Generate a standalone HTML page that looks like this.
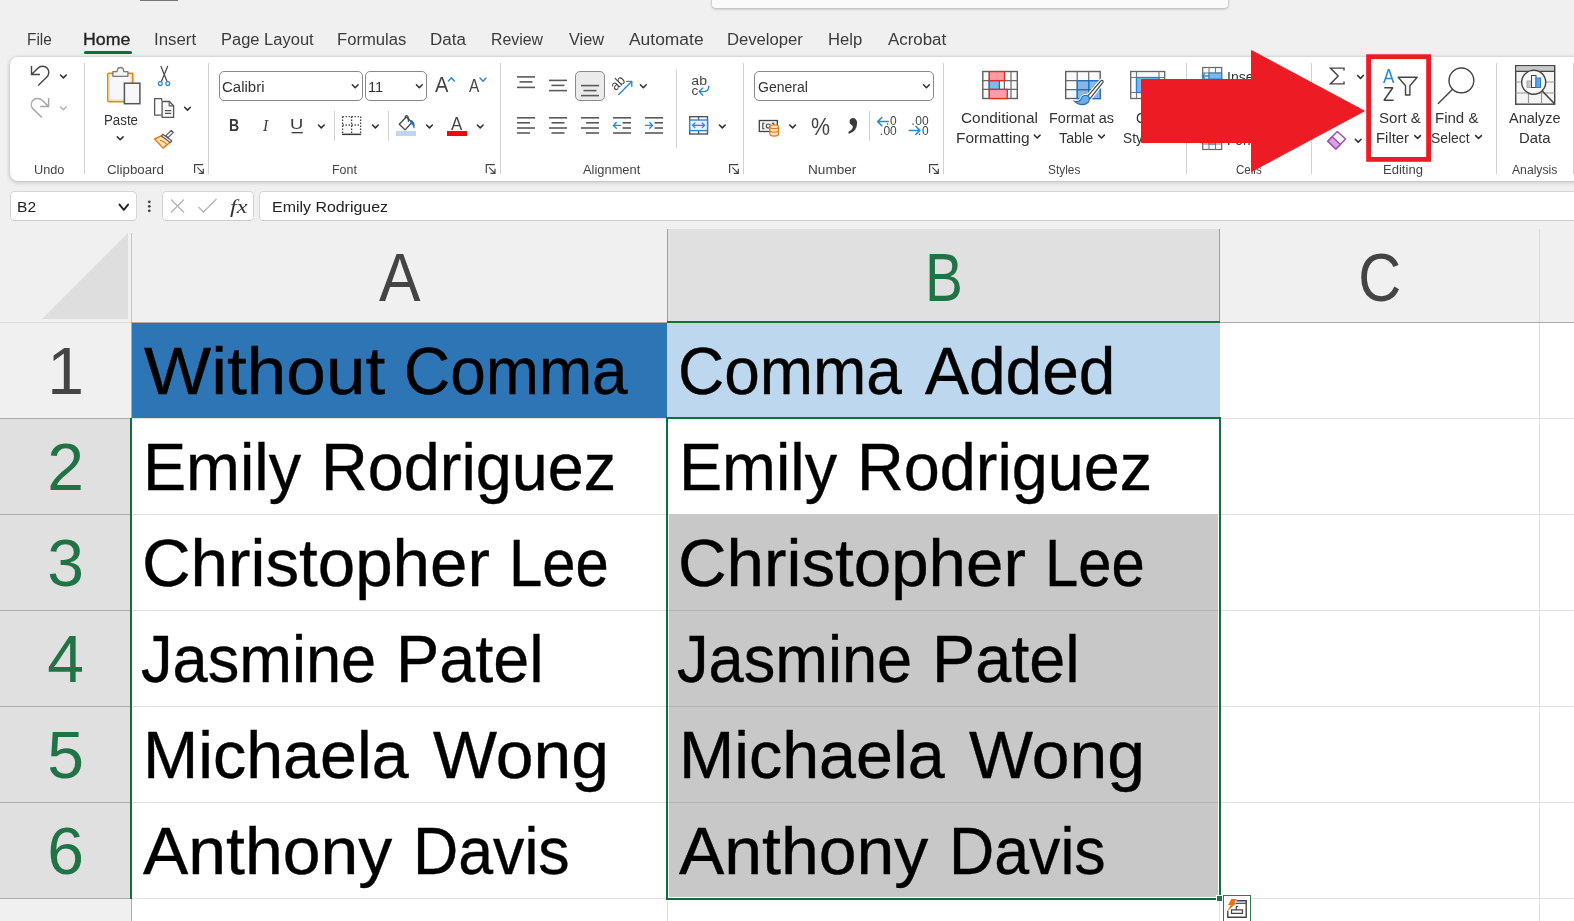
<!DOCTYPE html>
<html lang="en">
<head>
<meta charset="utf-8">
<title>Excel - Sort &amp; Filter</title>
<style>
*{box-sizing:border-box;margin:0;padding:0}
html,body{width:1574px;height:921px;overflow:hidden;background:#f0f0f0}
body{position:relative;font-family:"Liberation Sans",sans-serif;color:#242424}
.abs{position:absolute}
/* tabs */
.lb{position:absolute;white-space:nowrap}
#rc{position:absolute;left:0;top:0;width:1574px;height:230px;will-change:transform}
/* ribbon */
#ribbon{position:absolute;left:10px;top:57px;width:1600px;height:124px;background:#fff;border-radius:8px;box-shadow:0 1px 5px rgba(0,0,0,.22),0 0 2px rgba(0,0,0,.12)}
/* formula bar */
.fbox{position:absolute;top:191px;height:30px;background:#fff;border:1px solid #d6d6d6;border-bottom-color:#cbcbcb;border-radius:4.5px}
/* sheet */
#sheet{position:absolute;left:0;top:229px;width:1574px;height:692px;background:#fff}
.colh{position:absolute;top:0;height:93px;background:#f0f0f0;font-size:68.4px;line-height:96px;text-align:center;color:#444}
.rowh{position:absolute;left:0;width:131px;height:96px;background:#f0f0f0;font-size:66px;line-height:96px;text-align:center;color:#444}
.rowh.sel{background:#e0e0e0;color:#217346}
.cell{position:absolute;height:96px;font-size:66.5px;line-height:97px;color:#000;white-space:nowrap;overflow:hidden;-webkit-text-stroke:.4px #000}
.cell span{position:absolute;top:0;transform-origin:0 50%}
.hl{position:absolute;height:1px;background:#e1e1e1}
.vl{position:absolute;width:1px;background:#e1e1e1}
</style>
</head>
<body>
<!-- title bar search box remnant -->
<div class="abs" style="left:711px;top:-10px;width:518px;height:19px;background:#fafafa;border:1px solid #d0d0d0;border-bottom-color:#c4c4c4;border-radius:5px;box-shadow:0 1px 2px rgba(0,0,0,.14)"></div>
<div class="abs" style="left:140px;top:0;width:38px;height:1px;background:#777"></div>

<!-- tabs -->
<div class="abs" style="left:84px;top:51px;width:48px;height:3px;background:#0e703a;border-radius:2px"></div>

<!-- formula bar -->
<div class="fbox" style="left:10px;width:127px"></div>
<div class="fbox" style="left:162px;width:92px"></div>
<div class="fbox" style="left:259px;width:1400px"></div>
<!--FORMULA-ICONS-->
<!-- ribbon -->
<div id="ribbon"></div>
<!--RIBBON-CONTENT-->
<div id="rc">
<svg class="abs" style="left:0;top:0" width="1574" height="230" viewBox="0 0 1574 230">
<rect x="219.5" y="71.500" width="143" height="29" rx="4.500" fill="#fff" stroke="#8a8a8a" stroke-width="1"/>
<rect x="365.5" y="71.500" width="61" height="29" rx="4.500" fill="#fff" stroke="#8a8a8a" stroke-width="1"/>
<rect x="754.5" y="71.500" width="179" height="29" rx="4.500" fill="#fff" stroke="#8a8a8a" stroke-width="1"/>
<path d="M60.5 75.0l2.9 2.9l2.9 -2.9" fill="none" stroke="#2e2e2e" stroke-width="1.5" stroke-linecap="round" stroke-linejoin="round"/>
<path d="M117.3 136.9l2.9 2.9l2.9 -2.9" fill="none" stroke="#2e2e2e" stroke-width="1.5" stroke-linecap="round" stroke-linejoin="round"/>
<path d="M184.6 107.2l2.9 2.9l2.9 -2.9" fill="none" stroke="#2e2e2e" stroke-width="1.5" stroke-linecap="round" stroke-linejoin="round"/>
<path d="M352.3 84.8l2.9 2.9l2.9 -2.9" fill="none" stroke="#2e2e2e" stroke-width="1.5" stroke-linecap="round" stroke-linejoin="round"/>
<path d="M416.4 84.8l2.9 2.9l2.9 -2.9" fill="none" stroke="#2e2e2e" stroke-width="1.5" stroke-linecap="round" stroke-linejoin="round"/>
<path d="M318.4 125.0l2.9 2.9l2.9 -2.9" fill="none" stroke="#2e2e2e" stroke-width="1.5" stroke-linecap="round" stroke-linejoin="round"/>
<path d="M372.5 125.0l2.9 2.9l2.9 -2.9" fill="none" stroke="#2e2e2e" stroke-width="1.5" stroke-linecap="round" stroke-linejoin="round"/>
<path d="M426.6 125.0l2.9 2.9l2.9 -2.9" fill="none" stroke="#2e2e2e" stroke-width="1.5" stroke-linecap="round" stroke-linejoin="round"/>
<path d="M477.3 125.0l2.9 2.9l2.9 -2.9" fill="none" stroke="#2e2e2e" stroke-width="1.5" stroke-linecap="round" stroke-linejoin="round"/>
<path d="M640.4 84.8l2.9 2.9l2.9 -2.9" fill="none" stroke="#2e2e2e" stroke-width="1.5" stroke-linecap="round" stroke-linejoin="round"/>
<path d="M719.4 125.0l2.9 2.9l2.9 -2.9" fill="none" stroke="#2e2e2e" stroke-width="1.5" stroke-linecap="round" stroke-linejoin="round"/>
<path d="M923.5 84.8l2.9 2.9l2.9 -2.9" fill="none" stroke="#2e2e2e" stroke-width="1.5" stroke-linecap="round" stroke-linejoin="round"/>
<path d="M789.7 125.0l2.9 2.9l2.9 -2.9" fill="none" stroke="#2e2e2e" stroke-width="1.5" stroke-linecap="round" stroke-linejoin="round"/>
<path d="M1034.3 135.1l2.9 2.9l2.9 -2.9" fill="none" stroke="#2e2e2e" stroke-width="1.5" stroke-linecap="round" stroke-linejoin="round"/>
<path d="M1098.6 135.1l2.9 2.9l2.9 -2.9" fill="none" stroke="#2e2e2e" stroke-width="1.5" stroke-linecap="round" stroke-linejoin="round"/>
<path d="M1357.6 75.5l2.9 2.9l2.9 -2.9" fill="none" stroke="#2e2e2e" stroke-width="1.5" stroke-linecap="round" stroke-linejoin="round"/>
<path d="M1355.3 139.2l2.9 2.9l2.9 -2.9" fill="none" stroke="#2e2e2e" stroke-width="1.5" stroke-linecap="round" stroke-linejoin="round"/>
<path d="M1414.7 135.6l2.9 2.9l2.9 -2.9" fill="none" stroke="#2e2e2e" stroke-width="1.5" stroke-linecap="round" stroke-linejoin="round"/>
<path d="M1475.6 135.6l2.9 2.9l2.9 -2.9" fill="none" stroke="#2e2e2e" stroke-width="1.5" stroke-linecap="round" stroke-linejoin="round"/>
<path d="M1164.1 135.1l2.9 2.9l2.9 -2.9" fill="none" stroke="#2e2e2e" stroke-width="1.5" stroke-linecap="round" stroke-linejoin="round"/>
<path d="M1352.1 107.5l2.9 2.9l2.9 -2.9" fill="none" stroke="#2e2e2e" stroke-width="1.5" stroke-linecap="round" stroke-linejoin="round"/>
<path d="M60.5 106.8l2.9 2.9l2.9 -2.9" fill="none" stroke="#b4b4b4" stroke-width="1.5" stroke-linecap="round" stroke-linejoin="round"/>
<path d="M119.5 204.6l4.3 5.2l4.3 -5.2" fill="none" stroke="#222" stroke-width="1.9" stroke-linecap="round" stroke-linejoin="round"/>
<path d="M194.6 173.1v-8.5h8.5M197.3 167.3l6 6m0 -4.6v4.6h-4.6" fill="none" stroke="#444" stroke-width="1.2"/>
<path d="M486.3 173.1v-8.5h8.5M489.0 167.3l6 6m0 -4.6v4.6h-4.6" fill="none" stroke="#444" stroke-width="1.2"/>
<path d="M729.6 173.1v-8.5h8.5M732.3 167.3l6 6m0 -4.6v4.6h-4.6" fill="none" stroke="#444" stroke-width="1.2"/>
<path d="M929.6 173.1v-8.5h8.5M932.3 167.3l6 6m0 -4.6v4.6h-4.6" fill="none" stroke="#444" stroke-width="1.2"/>
<rect x="84" y="63" width="1" height="111" fill="#d2d2d2"/>
<rect x="208" y="63" width="1" height="111" fill="#d2d2d2"/>
<rect x="500" y="63" width="1" height="111" fill="#d2d2d2"/>
<rect x="743" y="63" width="1" height="111" fill="#d2d2d2"/>
<rect x="943" y="63" width="1" height="111" fill="#d2d2d2"/>
<rect x="1186" y="63" width="1" height="111" fill="#d2d2d2"/>
<rect x="1311" y="63" width="1" height="111" fill="#d2d2d2"/>
<rect x="1496" y="63" width="1" height="111" fill="#d2d2d2"/>
<rect x="1573" y="63" width="1" height="111" fill="#d2d2d2"/>
<rect x="334" y="111" width="1" height="30" fill="#d2d2d2"/>
<rect x="388" y="111" width="1" height="30" fill="#d2d2d2"/>
<rect x="869" y="111" width="1" height="30" fill="#d2d2d2"/>
<rect x="676" y="70" width="1" height="78" fill="#d2d2d2"/>
<path d="M31.500 66V74.500H40M32 74L37.600 68.400C40.500 65.500 45 65.700 47.300 68.300 49.600 71 49.200 74.800 46.600 77.300L38.200 85.400" fill="none" stroke="#444" stroke-width="1.400" stroke-linecap="butt" stroke-linejoin="miter"/>
<path d="M48.600 98.100V106.600H40.100M48.100 106.100L42.500 100.500C39.600 97.600 35.100 97.800 32.800 100.400 30.500 103.100 30.900 106.900 33.500 109.400L41.900 117.500" fill="none" stroke="#a8a8a8" stroke-width="1.500" stroke-linecap="butt" stroke-linejoin="miter"/>
<rect x="107.800" y="73.200" width="25" height="28.400" rx="1" fill="#f7f7f9" stroke="#e8821e" stroke-width="1.600"/>
<rect x="109.300" y="74.700" width="22" height="25.400" fill="none" stroke="#fbdf9f" stroke-width="1.400"/>
<path d="M112.900 76.300v-4.700h4.200c0-5.500 6.600-5.500 6.600 0h4.200v4.700z" fill="#f3f3f3" stroke="#7a7a7a" stroke-width="1.300" stroke-linejoin="round"/>
<rect x="124.400" y="83.200" width="15.500" height="20.500" fill="#f8f8fa" stroke="#555" stroke-width="1.500"/>
<path d="M161 66.400l6.200 15.300M167.600 66.400l-6.300 15.300" stroke="#444" stroke-width="1.200" fill="none" stroke-linecap="round"/>
<circle cx="160.300" cy="83.600" r="1.900" fill="#fff" stroke="#2b88d8" stroke-width="1.300"/><circle cx="167.800" cy="83.600" r="1.900" fill="#fff" stroke="#2b88d8" stroke-width="1.300"/>
<path d="M161.700 100.800V98.600H154.600V115.100H161.500" fill="none" stroke="#555" stroke-width="1.300" stroke-linejoin="round"/>
<path d="M162.100 101.500h7.300l4.200 4.200v11.700h-11.500z" fill="#f8f8f8" stroke="#555" stroke-width="1.300" stroke-linejoin="round"/><path d="M169.200 101.700v4.200h4.200M165 110.600h6.200M165 113.400h6.200" fill="none" stroke="#555" stroke-width="1.100"/>
<path d="M154.700 139L162.200 135.300 170.800 141.700 163 148.100Z" fill="#fbe4b4" stroke="#e07b16" stroke-width="1.400" stroke-linejoin="round"/>
<path d="M160 140.500c3 .5 5.500 2.200 7 4.500" fill="none" stroke="#e07b16" stroke-width="1.100"/>
<path d="M165.900 135.600L171.300 130.400 173.400 132.400 168 137.700Z" fill="#f3f3f3" stroke="#555" stroke-width="1.100" stroke-linejoin="round"/>
<path d="M162.800 134.200L171.800 140.800 170.400 142.600 161.400 136Z" fill="#f3f3f3" stroke="#555" stroke-width="1.100" stroke-linejoin="round"/>
<path d="M448.4 81l3-3.2 3 3.2" fill="none" stroke="#2b88d8" stroke-width="1.5" stroke-linecap="round" stroke-linejoin="round"/>
<path d="M480 78l3 3.2 3-3.2" fill="none" stroke="#2b88d8" stroke-width="1.5" stroke-linecap="round" stroke-linejoin="round"/>
<rect x="291.6" y="132" width="11.2" height="1.3" fill="#3a3a3a"/>
<path d="M342.6 116.6h18M342.6 116.6v17M360.6 116.6v17M351.6 116.6v17M342.6 125h18" fill="none" stroke="#3f3f3f" stroke-width="1.3" stroke-dasharray="1.300 1.700"/><rect x="342" y="133.6" width="19.2" height="1.5" fill="#3a3a3a"/>
<rect x="396" y="131" width="20" height="5" fill="#bdd7ee"/>
<path d="M406.200 117L399.300 124.300 405.100 129.900 412.100 122.300Z" fill="#fff" stroke="#444" stroke-width="1.300" stroke-linejoin="round"/><path d="M405.400 117.800c-.800-1.700 1.300-2.900 2.300-1.700.600.800.700 2.800.700 5.300" fill="none" stroke="#444" stroke-width="1.200" stroke-linecap="round"/><path d="M410.800 120.300c2.200.500 3.500 2.400 3.500 4.800 0 1.200 0 2.200-.200 3.200-.700-2.600-1.700-4.300-3.600-5.300z" fill="#1e6fc0" stroke="#1e6fc0" stroke-width=".600" stroke-linejoin="round"/>
<rect x="447" y="131" width="20" height="5" fill="#f00"/>
<rect x="517.0" y="76.1" width="18.0" height="1.6" fill="#5a5a5a"/>
<rect x="519.5" y="81.1" width="13.0" height="1.6" fill="#5a5a5a"/>
<rect x="517.0" y="86.6" width="18.0" height="1.6" fill="#5a5a5a"/>
<rect x="549.0" y="79.6" width="18.0" height="1.6" fill="#5a5a5a"/>
<rect x="551.5" y="84.6" width="13.0" height="1.6" fill="#5a5a5a"/>
<rect x="549.0" y="89.8" width="18.0" height="1.6" fill="#5a5a5a"/>
<rect x="575.500" y="71.500" width="29" height="29" rx="4.500" fill="#ebebeb" stroke="#8a8a8a" stroke-width="1"/>
<rect x="581.0" y="84.8" width="18.0" height="1.6" fill="#5a5a5a"/>
<rect x="583.5" y="89.8" width="13.0" height="1.6" fill="#5a5a5a"/>
<rect x="581.0" y="94.8" width="18.0" height="1.6" fill="#5a5a5a"/>
<rect x="517.0" y="117.0" width="18.0" height="1.6" fill="#5a5a5a"/>
<rect x="517.0" y="122.0" width="13.0" height="1.6" fill="#5a5a5a"/>
<rect x="517.0" y="127.2" width="18.0" height="1.6" fill="#5a5a5a"/>
<rect x="517.0" y="132.2" width="13.0" height="1.6" fill="#5a5a5a"/>
<rect x="549.0" y="117.0" width="18.0" height="1.6" fill="#5a5a5a"/>
<rect x="551.5" y="122.0" width="13.0" height="1.6" fill="#5a5a5a"/>
<rect x="549.0" y="127.2" width="18.0" height="1.6" fill="#5a5a5a"/>
<rect x="551.5" y="132.2" width="13.0" height="1.6" fill="#5a5a5a"/>
<rect x="581.0" y="117.0" width="18.0" height="1.6" fill="#5a5a5a"/>
<rect x="586.0" y="122.0" width="13.0" height="1.6" fill="#5a5a5a"/>
<rect x="581.0" y="127.2" width="18.0" height="1.6" fill="#5a5a5a"/>
<rect x="586.0" y="132.2" width="13.0" height="1.6" fill="#5a5a5a"/>
<rect x="613.0" y="117.0" width="18.0" height="1.6" fill="#5a5a5a"/>
<rect x="613.0" y="132.2" width="18.0" height="1.6" fill="#5a5a5a"/>
<rect x="622.5" y="122.0" width="8.5" height="1.6" fill="#5a5a5a"/>
<rect x="622.5" y="127.2" width="8.5" height="1.6" fill="#5a5a5a"/>
<path d="M613.5 125.400h7M616.300 122.600l-2.800 2.800 2.800 2.800" fill="none" stroke="#2b88d8" stroke-width="1.400" stroke-linecap="round" stroke-linejoin="round"/>
<rect x="645.0" y="117.0" width="18.0" height="1.6" fill="#5a5a5a"/>
<rect x="645.0" y="132.2" width="18.0" height="1.6" fill="#5a5a5a"/>
<rect x="654.5" y="122.0" width="8.5" height="1.6" fill="#5a5a5a"/>
<rect x="654.5" y="127.2" width="8.5" height="1.6" fill="#5a5a5a"/>
<path d="M645.500 125.400h7M649.700 122.600l2.800 2.800-2.800 2.800" fill="none" stroke="#2b88d8" stroke-width="1.400" stroke-linecap="round" stroke-linejoin="round"/>
<text transform="translate(615.800 91.300) rotate(-45)" font-family="Liberation Sans, sans-serif" font-size="14" fill="#444" textLength="14.500" lengthAdjust="spacingAndGlyphs">ab</text>
<path d="M618.700 94.400l13-13M626.600 81.400h5.200v5.200" fill="none" stroke="#2b88d8" stroke-width="1.400" stroke-linecap="round" stroke-linejoin="round"/>
<text x="691.300" y="85.400" font-family="Liberation Sans, sans-serif" font-size="13.500" fill="#444" textLength="15.700" lengthAdjust="spacingAndGlyphs">ab</text><text x="691.500" y="94.500" font-family="Liberation Sans, sans-serif" font-size="13.500" fill="#444">c</text>
<path d="M708.700 86.200c.400 3-1.400 5.300-4.400 5.400h-4.600M702.800 88l-3.600 3.600 3.600 3.600" fill="none" stroke="#2b88d8" stroke-width="1.400" stroke-linecap="round" stroke-linejoin="round"/>
<rect x="689.700" y="116.700" width="17.800" height="17.300" fill="#fff" stroke="#555" stroke-width="1.400"/><path d="M698.600 116.700v3.300M698.600 131v3" stroke="#555" stroke-width="1.300"/><rect x="689.700" y="120" width="17.800" height="10.600" fill="#eaf3fc" stroke="#2b88d8" stroke-width="1.400"/><path d="M692.500 125.300h12.200M695 123l-2.500 2.300 2.500 2.300M702.200 123l2.500 2.300-2.500 2.300" fill="none" stroke="#2b88d8" stroke-width="1.200" stroke-linecap="round" stroke-linejoin="round"/>
<rect x="759.300" y="120.500" width="18" height="11" fill="#f3f3f3" stroke="#444" stroke-width="1.300"/><path d="M764.500 123.300h-1.700v5.400h1.700M772 123.300h1.700v2" fill="none" stroke="#444" stroke-width="1.100"/><circle cx="768.300" cy="126" r="2" fill="none" stroke="#444" stroke-width="1.100"/>
<path d="M769.800 126.800v7c0 3 8.800 3 8.800 0v-7" fill="#fde3c2" stroke="#e07b16" stroke-width="1.200"/><ellipse cx="774.200" cy="126.800" rx="4.400" ry="1.900" fill="#fde3c2" stroke="#e07b16" stroke-width="1.200"/><path d="M769.800 130.300c0 2.600 8.800 2.600 8.800 0" fill="none" stroke="#e07b16" stroke-width="1.100"/>
<text x="890.1" y="124.7" font-family="Liberation Sans, sans-serif" font-size="12" fill="#444">0</text>
<text x="883.4" y="134.9" font-family="Liberation Sans, sans-serif" font-size="12" fill="#444">0</text>
<text x="890.1" y="134.9" font-family="Liberation Sans, sans-serif" font-size="12" fill="#444">0</text>
<rect x="886.9" y="123.4" width="1.300" height="1.300" fill="#444"/>
<rect x="880.7" y="133.6" width="1.300" height="1.300" fill="#444"/>
<path d="M888.300 121.600H877.800M881.800 117.500l-4.100 4.100 4.100 4.100" fill="none" stroke="#2b88d8" stroke-width="1.500" stroke-linecap="round" stroke-linejoin="round"/>
<text x="915.2" y="124.7" font-family="Liberation Sans, sans-serif" font-size="12" fill="#444">0</text>
<text x="921.9" y="124.7" font-family="Liberation Sans, sans-serif" font-size="12" fill="#444">0</text>
<text x="921.9" y="134.9" font-family="Liberation Sans, sans-serif" font-size="12" fill="#444">0</text>
<rect x="912.5" y="123.4" width="1.300" height="1.300" fill="#444"/>
<rect x="918.9" y="133.6" width="1.300" height="1.300" fill="#444"/>
<path d="M909.300 130.400H919.800M915.800 126.300l4.100 4.100-4.100 4.100" fill="none" stroke="#2b88d8" stroke-width="1.500" stroke-linecap="round" stroke-linejoin="round"/>
<rect x="982.800" y="71.500" width="34.500" height="27" fill="#fafafa" stroke="#5f5f5f" stroke-width="1.400"/>
<path d="M989.200 71.500v27M1011 71.500v27M1004.400 71.500v27M982.800 80.600h34.500M982.800 89.400h34.500" stroke="#6a6a6a" stroke-width="1.200" fill="none"/>
<rect x="989.200" y="80.600" width="10.200" height="8.800" fill="#83b9e9" stroke="#1e6fc0" stroke-width="1.300"/>
<rect x="989.300" y="71.600" width="15.200" height="9" fill="#fc9ca5" stroke="#e02b20" stroke-width="1.300"/>
<rect x="989.300" y="89.400" width="18" height="9.100" fill="#fc9ca5" stroke="#e02b20" stroke-width="1.300"/>
<rect x="1065.700" y="71.500" width="34.500" height="27" fill="#fafafa" stroke="#5f5f5f" stroke-width="1.400"/>
<rect x="1077.200" y="80.600" width="23" height="18" fill="#83b9e9"/>
<path d="M1077.200 71.500v27M1088.700 71.500v27M1065.700 80.600h34.500M1065.700 89.600h34.500" stroke="#6a6a6a" stroke-width="1.200" fill="none"/>
<path d="M1077.200 80.600h23v18h-23z" fill="none" stroke="#1e6fc0" stroke-width="1.200"/><path d="M1088.700 80.600v18M1077.200 89.600h23" stroke="#1e6fc0" stroke-width="1.200"/>
<path d="M1087.300 96.600L1100.800 80.900C1101.800 79.800 1103.700 80.600 1103 82.300L1089.800 98.800Z" fill="#fafafa" stroke="#fff" stroke-width="3.600" stroke-linejoin="round"/>
<path d="M1074.200 101.200C1078 102.200 1080.500 100.500 1081.500 98 1082.500 95.500 1085.500 94.500 1087.800 96 1090 97.500 1090 100.500 1088 102.500 1084.500 105.800 1078 105.300 1074.200 101.200Z" fill="#6aaee8" stroke="#fff" stroke-width="2.600"/>
<path d="M1087.300 96.600L1100.800 80.900C1101.800 79.800 1103.700 80.600 1103 82.300L1089.800 98.800Z" fill="#fafafa" stroke="#444" stroke-width="1.200" stroke-linejoin="round"/>
<path d="M1074.200 101.200C1078 102.200 1080.500 100.500 1081.500 98 1082.500 95.500 1085.500 94.500 1087.800 96 1090 97.500 1090 100.500 1088 102.500 1084.500 105.800 1078 105.300 1074.200 101.200Z" fill="#6aaee8" stroke="#1e6fc0" stroke-width="1.100"/>
<rect x="1130.700" y="71.500" width="34" height="27" fill="#fafafa" stroke="#666" stroke-width="1.300"/><path d="M1136.500 71.500v27M1159 71.500v27M1130.700 77.500h34M1130.700 92.500h34" stroke="#777" stroke-width="1.100"/><rect x="1136.500" y="77.500" width="22.500" height="15" fill="#7db8ec" stroke="#2b7cd3" stroke-width="1.300"/>
<rect x="1202.700" y="67.500" width="19" height="17.500" fill="#fafafa" stroke="#666" stroke-width="1.200"/><path d="M1209 67.500v17.500M1215.500 67.500v17.500M1202.700 73h19M1202.700 79h19" stroke="#777" stroke-width="1"/><rect x="1209" y="73" width="12.700" height="6" fill="#7db8ec" stroke="#2b7cd3" stroke-width="1"/><path d="M1202.300 76h7M1205 73.300l-2.700 2.700 2.700 2.700" fill="none" stroke="#2b88d8" stroke-width="1.300"/>
<rect x="1202.700" y="132" width="19" height="17.500" fill="#fafafa" stroke="#666" stroke-width="1.200"/><path d="M1209 132v17.500M1215.500 132v17.500M1202.700 138h19M1202.700 144h19" stroke="#777" stroke-width="1"/><rect x="1209" y="138" width="6.500" height="6" fill="#7db8ec" stroke="#2b7cd3" stroke-width="1"/>
<path d="M1344 70.5v-2.400h-13.600l7.800 7.900-7.800 7.900h13.600v-2.400" fill="none" stroke="#444" stroke-width="1.400" stroke-linejoin="miter"/>
<path d="M1327.800 141.300l9.500-9.800 8.300 7.600-9.700 9.900z" fill="#f7f7f7" stroke="#a349b8" stroke-width="1.400" stroke-linejoin="round"/><path d="M1327.800 141.300l4.400-4.500 8.200 7.600-4.500 4.600z" fill="#d9a2e0" stroke="#a349b8" stroke-width="1.400" stroke-linejoin="round"/>
<path d="M1398.200 77.300h19l-7.300 8.400v9.300h-4.400v-9.300z" fill="#f7f7f7" stroke="#444" stroke-width="1.400" stroke-linejoin="round"/>
<circle cx="1461.400" cy="80.400" r="12.400" fill="none" stroke="#444" stroke-width="1.400"/><path d="M1452.300 89.500l-14 14" stroke="#444" stroke-width="1.400" stroke-linecap="round"/>
<rect x="1515.700" y="65.700" width="39" height="38.500" fill="#f4f4f4" stroke="#444" stroke-width="1.400"/><rect x="1516.400" y="66.400" width="37.600" height="4.600" fill="#c8c8c8"/><path d="M1515.700 82h39M1515.700 93h39M1528.500 93v11M1541.500 93v11" stroke="#9a9a9a" stroke-width="1.200"/><path d="M1515.700 71.300h39" stroke="#444" stroke-width="1.200"/>
<circle cx="1533.700" cy="82.300" r="12" fill="#f8f8f8" stroke="#444" stroke-width="1.400"/><rect x="1527" y="81" width="4.500" height="6.500" fill="#c8c8c8" stroke="#999" stroke-width=".8"/><rect x="1531.500" y="75.500" width="4.500" height="12" fill="#f4f4f4" stroke="#444" stroke-width="1"/><rect x="1536" y="78" width="4.500" height="9.500" fill="#5ea6e6" stroke="#2b7cd3" stroke-width="1"/><path d="M1542.300 91l12 12.500" stroke="#444" stroke-width="1.600"/>
<circle cx="149.300" cy="201.800" r="1.400" fill="#444"/><circle cx="149.300" cy="206.300" r="1.400" fill="#444"/><circle cx="149.300" cy="210.800" r="1.400" fill="#444"/>
<path d="M171 199.500l13 13M184 199.500l-13 13" stroke="#b5b5b5" stroke-width="1.300" fill="none"/><path d="M198.500 207l5 5 13-13" stroke="#b5b5b5" stroke-width="1.300" fill="none"/>
</svg>
<div class="lb" style="left:26.64px;top:31.00px;font-size:16px;line-height:17px;color:#3b3b3b;transform:scaleX(0.9605);transform-origin:0 0">File</div>
<div class="lb" style="left:153.65px;top:31.00px;font-size:16px;line-height:17px;color:#3b3b3b;transform:scaleX(1.0513);transform-origin:0 0">Insert</div>
<div class="lb" style="left:220.67px;top:31.00px;font-size:16px;line-height:17px;color:#3b3b3b;transform:scaleX(1.0312);transform-origin:0 0">Page Layout</div>
<div class="lb" style="left:337.26px;top:31.00px;font-size:16px;line-height:17px;color:#3b3b3b;transform:scaleX(1.0399);transform-origin:0 0">Formulas</div>
<div class="lb" style="left:430.34px;top:31.00px;font-size:16px;line-height:17px;color:#3b3b3b;transform:scaleX(1.0608);transform-origin:0 0">Data</div>
<div class="lb" style="left:490.61px;top:31.00px;font-size:16px;line-height:17px;color:#3b3b3b;transform:scaleX(0.9902);transform-origin:0 0">Review</div>
<div class="lb" style="left:568.50px;top:31.00px;font-size:16px;line-height:17px;color:#3b3b3b;transform:scaleX(1.0191);transform-origin:0 0">View</div>
<div class="lb" style="left:628.80px;top:31.00px;font-size:16px;line-height:17px;color:#3b3b3b;transform:scaleX(1.0891);transform-origin:0 0">Automate</div>
<div class="lb" style="left:726.96px;top:31.00px;font-size:16px;line-height:17px;color:#3b3b3b;transform:scaleX(1.0399);transform-origin:0 0">Developer</div>
<div class="lb" style="left:827.96px;top:31.00px;font-size:16px;line-height:17px;color:#3b3b3b;transform:scaleX(1.0404);transform-origin:0 0">Help</div>
<div class="lb" style="left:887.70px;top:31.00px;font-size:16px;line-height:17px;color:#3b3b3b;transform:scaleX(1.0557);transform-origin:0 0">Acrobat</div>
<div class="lb" style="left:83.29px;top:31.00px;font-size:16px;line-height:17px;color:#242424;transform:scaleX(1.1105);transform-origin:0 0;-webkit-text-stroke:0.3px #242424">Home</div>
<div class="lb" style="left:33.50px;top:163.00px;font-size:12.5px;line-height:14px;color:#444;transform:scaleX(1.0190);transform-origin:0 0">Undo</div>
<div class="lb" style="left:107.40px;top:163.00px;font-size:12.5px;line-height:14px;color:#444;transform:scaleX(1.0644);transform-origin:0 0">Clipboard</div>
<div class="lb" style="left:331.50px;top:163.00px;font-size:12.5px;line-height:14px;color:#444;transform:scaleX(0.9984);transform-origin:0 0">Font</div>
<div class="lb" style="left:583.20px;top:163.00px;font-size:12.5px;line-height:14px;color:#444;transform:scaleX(1.0301);transform-origin:0 0">Alignment</div>
<div class="lb" style="left:808.41px;top:163.00px;font-size:12.5px;line-height:14px;color:#444;transform:scaleX(1.0879);transform-origin:0 0">Number</div>
<div class="lb" style="left:1048.30px;top:163.00px;font-size:12.5px;line-height:14px;color:#444;transform:scaleX(0.9500);transform-origin:0 0">Styles</div>
<div class="lb" style="left:1235.50px;top:163.00px;font-size:12.5px;line-height:14px;color:#444;transform:scaleX(0.9262);transform-origin:0 0">Cells</div>
<div class="lb" style="left:1383.46px;top:163.00px;font-size:12.5px;line-height:14px;color:#444;transform:scaleX(1.0438);transform-origin:0 0">Editing</div>
<div class="lb" style="left:1512.20px;top:163.00px;font-size:12.5px;line-height:14px;color:#444;transform:scaleX(0.9742);transform-origin:0 0">Analysis</div>
<div class="lb" style="left:104.04px;top:111.00px;font-size:15.5px;line-height:17px;color:#333;transform:scaleX(0.8576);transform-origin:0 0">Paste</div>
<div class="lb" style="left:961.00px;top:109.00px;font-size:15.5px;line-height:17px;color:#333;transform:scaleX(0.9908);transform-origin:0 0">Conditional</div>
<div class="lb" style="left:955.51px;top:129.00px;font-size:15.5px;line-height:17px;color:#333;transform:scaleX(0.9937);transform-origin:0 0">Formatting</div>
<div class="lb" style="left:1049.37px;top:109.00px;font-size:15.5px;line-height:17px;color:#333;transform:scaleX(0.9331);transform-origin:0 0">Format as</div>
<div class="lb" style="left:1058.90px;top:129.00px;font-size:15.5px;line-height:17px;color:#333;transform:scaleX(0.9195);transform-origin:0 0">Table</div>
<div class="lb" style="left:1136.40px;top:109.00px;font-size:15.5px;line-height:17px;color:#333;transform:scaleX(0.8797);transform-origin:0 0">Cell</div>
<div class="lb" style="left:1122.50px;top:129.00px;font-size:15.5px;line-height:17px;color:#333;transform:scaleX(0.8832);transform-origin:0 0">Styles</div>
<div class="lb" style="left:1227.19px;top:68.00px;font-size:15.5px;line-height:17px;color:#333;transform:scaleX(0.9075);transform-origin:0 0">Insert</div>
<div class="lb" style="left:1227.20px;top:100.00px;font-size:15.5px;line-height:17px;color:#333;transform:scaleX(0.9008);transform-origin:0 0">Delete</div>
<div class="lb" style="left:1227.22px;top:131.00px;font-size:15.5px;line-height:17px;color:#333;transform:scaleX(0.8794);transform-origin:0 0">Format</div>
<div class="lb" style="left:1378.70px;top:109.00px;font-size:15.5px;line-height:17px;color:#333;transform:scaleX(0.9695);transform-origin:0 0">Sort &amp;</div>
<div class="lb" style="left:1376.04px;top:129.00px;font-size:15.5px;line-height:17px;color:#333;transform:scaleX(0.9585);transform-origin:0 0">Filter</div>
<div class="lb" style="left:1434.53px;top:109.00px;font-size:15.5px;line-height:17px;color:#333;transform:scaleX(0.9694);transform-origin:0 0">Find &amp;</div>
<div class="lb" style="left:1430.60px;top:129.00px;font-size:15.5px;line-height:17px;color:#333;transform:scaleX(0.8955);transform-origin:0 0">Select</div>
<div class="lb" style="left:1509.40px;top:109.00px;font-size:15.5px;line-height:17px;color:#333;transform:scaleX(0.9354);transform-origin:0 0">Analyze</div>
<div class="lb" style="left:1518.84px;top:129.00px;font-size:15.5px;line-height:17px;color:#333;transform:scaleX(0.9589);transform-origin:0 0">Data</div>
<div class="lb" style="left:222.20px;top:78.00px;font-size:15.5px;line-height:17px;color:#333;transform:scaleX(0.9682);transform-origin:0 0">Calibri</div>
<div class="lb" style="left:367.85px;top:78.00px;font-size:15.5px;line-height:17px;color:#333;transform:scaleX(0.9468);transform-origin:0 0">11</div>
<div class="lb" style="left:757.50px;top:78.00px;font-size:15.5px;line-height:17px;color:#333;transform:scaleX(0.9049);transform-origin:0 0">General</div>
<div class="lb" style="left:17.00px;top:198.00px;font-size:15.5px;line-height:17px;color:#222;transform:scaleX(1.0036);transform-origin:0 0">B2</div>
<div class="lb" style="left:272.27px;top:198.00px;font-size:15.5px;line-height:17px;color:#222;transform:scaleX(1.0280);transform-origin:0 0">Emily Rodriguez</div>
<div class="lb" style="left:228.85px;top:116.00px;font-size:16.5px;line-height:18px;color:#3a3a3a;transform:scaleX(0.8545);transform-origin:0 0;font-weight:bold">B</div>
<div class="lb" style="left:263.41px;top:116.00px;font-size:17px;line-height:19px;color:#3a3a3a;transform:scaleX(0.9125);transform-origin:0 0;font-style:italic;font-family:'Liberation Serif',serif">I</div>
<div class="lb" style="left:290.48px;top:115.00px;font-size:15px;line-height:17px;color:#3a3a3a;transform:scaleX(1.2222);transform-origin:0 0">U</div>
<div class="lb" style="left:435.20px;top:72.00px;font-size:22px;line-height:25px;color:#444;transform:scaleX(0.9133);transform-origin:0 0">A</div>
<div class="lb" style="left:469.20px;top:76.00px;font-size:17.5px;line-height:20px;color:#444;transform:scaleX(0.8833);transform-origin:0 0">A</div>
<div class="lb" style="left:451.40px;top:113.00px;font-size:18.5px;line-height:21px;color:#444;transform:scaleX(0.9154);transform-origin:0 0">A</div>
<div class="lb" style="left:810.60px;top:113.00px;font-size:24px;line-height:27px;color:#444;transform:scaleX(0.8905);transform-origin:0 0">%</div>
<div class="lb" style="left:847.50px;top:80.00px;font-size:52px;line-height:57px;color:#3a3a3a;transform:scaleX(0.8250);transform-origin:0 0;font-weight:bold;font-family:'Liberation Serif',serif">,</div>
<div class="lb" style="left:229.50px;top:196.00px;font-size:19px;line-height:21px;color:#333;transform:scaleX(1.2606);transform-origin:0 0;font-style:italic;font-family:'Liberation Serif',serif">fx</div>
<div class="lb" style="left:1382.60px;top:65.00px;font-size:20px;line-height:22px;color:#2b88d8;transform:scaleX(0.8571);transform-origin:0 0">A</div>
<div class="lb" style="left:1382.60px;top:83.00px;font-size:19.5px;line-height:22px;color:#444;transform:scaleX(0.9417);transform-origin:0 0">Z</div>
</div>
<!--/RIBBON-CONTENT-->



<!-- sheet -->
<div id="sheet">
<div class="abs" style="left:0;top:0;width:1574px;height:93px;background:#f0f0f0"></div>
<svg class="abs" style="left:0;top:0" width="131" height="93"><polygon points="128,4 128,90 42,90" fill="#dedede"/></svg>
<div class="colh" style="left:132px;width:535px;background:transparent"><span style="display:inline-block;transform:scaleX(.91)">A</span></div>
<div class="colh" style="left:667px;width:553px;height:92px;background:#e0e0e0;color:#217346;border-left:1px solid #9f9f9f;border-right:1px solid #9f9f9f"><span style="display:inline-block;transform:scaleX(.83)">B</span></div>
<div class="colh" style="left:1220px;width:319px;background:transparent"><span style="display:inline-block;transform:scaleX(.87)">C</span></div>
<div class="abs" style="left:0;top:93px;width:1574px;height:1px;background:#ababab"></div>
<div class="abs" style="left:0;top:93px;width:131px;height:1px;background:#dcdcdc"></div>
<div class="abs" style="left:131px;top:4px;width:1px;height:89px;background:#c6c6c6"></div>
<div class="abs" style="left:1539px;top:0;width:1px;height:93px;background:#dadada"></div>
<div class="abs" style="left:667px;top:92px;width:553px;height:2px;background:#0f703b"></div>
<div class="rowh" style="top:94px;height:95px;line-height:96px">1</div>
<div class="abs" style="left:0;top:189px;width:131px;height:1px;background:#ababab"></div>
<div class="rowh sel" style="top:190px;height:95px;line-height:96px">2</div>
<div class="abs" style="left:0;top:285px;width:131px;height:1px;background:#ababab"></div>
<div class="rowh sel" style="top:286px;height:95px;line-height:96px">3</div>
<div class="abs" style="left:0;top:381px;width:131px;height:1px;background:#ababab"></div>
<div class="rowh sel" style="top:382px;height:95px;line-height:96px">4</div>
<div class="abs" style="left:0;top:477px;width:131px;height:1px;background:#ababab"></div>
<div class="rowh sel" style="top:478px;height:95px;line-height:96px">5</div>
<div class="abs" style="left:0;top:573px;width:131px;height:1px;background:#ababab"></div>
<div class="rowh sel" style="top:574px;height:95px;line-height:96px">6</div>
<div class="abs" style="left:0;top:669px;width:131px;height:1px;background:#ababab"></div>
<div class="rowh" style="top:670px;height:40px;line-height:96px"></div>
<div class="abs" style="left:131px;top:94px;width:1px;height:600px;background:#ababab"></div>
<div class="abs" style="left:130px;top:189px;width:2px;height:481px;background:#0f703b"></div>
<div class="hl" style="left:132px;top:189px;width:1442px"></div>
<div class="hl" style="left:132px;top:285px;width:1442px"></div>
<div class="hl" style="left:132px;top:381px;width:1442px"></div>
<div class="hl" style="left:132px;top:477px;width:1442px"></div>
<div class="hl" style="left:132px;top:573px;width:1442px"></div>
<div class="hl" style="left:132px;top:669px;width:1442px"></div>
<div class="vl" style="left:667px;top:94px;height:600px"></div>
<div class="vl" style="left:1219px;top:94px;height:600px"></div>
<div class="vl" style="left:1539px;top:94px;height:600px"></div>
<div class="abs" style="left:132px;top:94px;width:535px;height:95px;background:#2e75b6"></div>
<div class="abs" style="left:667px;top:94px;width:553px;height:95px;background:#bdd7ee"></div>
<div class="abs" style="left:669px;top:285px;width:549px;height:383px;background:#c8c8c8"></div>
<div class="abs" style="left:669px;top:381px;width:549px;height:1px;background:#b2b2b2"></div>
<div class="abs" style="left:669px;top:477px;width:549px;height:1px;background:#b2b2b2"></div>
<div class="abs" style="left:669px;top:573px;width:549px;height:1px;background:#b2b2b2"></div>
<div class="abs" style="left:666px;top:188px;width:555px;height:483px;border:2px solid #0f703b"></div>
<div class="abs" style="left:1216px;top:666px;width:7px;height:7px;background:#217346;border:1px solid #fff"></div>
<div class="abs" style="left:1223px;top:666px;width:28px;height:28px;background:#fff;border:1px solid #2b7d4f"></div>
<svg class="abs" style="left:1224px;top:667px" width="26" height="26" viewBox="1224 896 26 26"><path d="M1236.500 900.700h9.700v16.500h-18.400v-6.500" fill="#fff" stroke="#444" stroke-width="1.400"/><path d="M1236 903.300h10" stroke="#444" stroke-width="1.200"/><path d="M1231.500 909.800h11v3.600h-11zM1236.300 909.500v-3h1.700" fill="none" stroke="#444" stroke-width="1.200"/><path d="M1231.300 899h5.400l-2.400 3.600h2.600l-9.700 8.600 3.600-6.200h-2.700z" fill="#e8720c"/></svg>
<div class="cell" style="left:132px;top:94px;width:535px"><span style="left:12.20px;transform:scaleX(1.0704)">Without</span> <span style="left:272.42px;transform:scaleX(0.9608)">Comma</span></div>
<div class="cell" style="left:669px;top:94px;width:549px"><span style="left:9.31px;transform:scaleX(0.9617)">Comma</span> <span style="left:256.30px;transform:scaleX(0.9904)">Added</span></div>
<div class="cell" style="left:132px;top:190px;width:535px"><span style="left:11.04px;transform:scaleX(0.9722)">Emily</span> <span style="left:189.23px;transform:scaleX(0.9740)">Rodriguez</span></div>
<div class="cell" style="left:669px;top:190px;width:549px"><span style="left:10.04px;transform:scaleX(0.9722)">Emily</span> <span style="left:188.23px;transform:scaleX(0.9740)">Rodriguez</span></div>
<div class="cell" style="left:132px;top:286px;width:535px"><span style="left:9.56px;transform:scaleX(1.0121)">Christopher</span> <span style="left:377.20px;transform:scaleX(0.8993)">Lee</span></div>
<div class="cell" style="left:669px;top:286px;width:549px"><span style="left:8.56px;transform:scaleX(1.0121)">Christopher</span> <span style="left:376.20px;transform:scaleX(0.8993)">Lee</span></div>
<div class="cell" style="left:132px;top:382px;width:535px"><span style="left:9.25px;transform:scaleX(0.9500)">Jasmine</span> <span style="left:264.23px;transform:scaleX(0.9734)">Patel</span></div>
<div class="cell" style="left:669px;top:382px;width:549px"><span style="left:8.25px;transform:scaleX(0.9500)">Jasmine</span> <span style="left:263.23px;transform:scaleX(0.9734)">Patel</span></div>
<div class="cell" style="left:132px;top:478px;width:535px"><span style="left:10.91px;transform:scaleX(0.9979)">Michaela</span> <span style="left:300.60px;transform:scaleX(1.0200)">Wong</span></div>
<div class="cell" style="left:669px;top:478px;width:549px"><span style="left:9.91px;transform:scaleX(0.9979)">Michaela</span> <span style="left:299.60px;transform:scaleX(1.0200)">Wong</span></div>
<div class="cell" style="left:132px;top:574px;width:535px"><span style="left:11.20px;transform:scaleX(1.0210)">Anthony</span> <span style="left:280.59px;transform:scaleX(0.9419)">Davis</span></div>
<div class="cell" style="left:669px;top:574px;width:549px"><span style="left:10.20px;transform:scaleX(1.0210)">Anthony</span> <span style="left:279.59px;transform:scaleX(0.9419)">Davis</span></div>
</div>

<!-- red annotation -->
<svg class="abs" style="left:0;top:0" width="1574" height="230" viewBox="0 0 1574 230">
<polygon points="1141.5,79.5 1251.5,79.5 1251.5,50.5 1364.3,111 1251.5,171.5 1251.5,142.500 1141.5,142.500" fill="#ed1c24" stroke="#ed1c24" stroke-width="1" stroke-linejoin="round"/>
<rect x="1368.600" y="56.700" width="60" height="102.700" fill="none" stroke="#ed1c24" stroke-width="4.800"/>
</svg>
</body>
</html>
